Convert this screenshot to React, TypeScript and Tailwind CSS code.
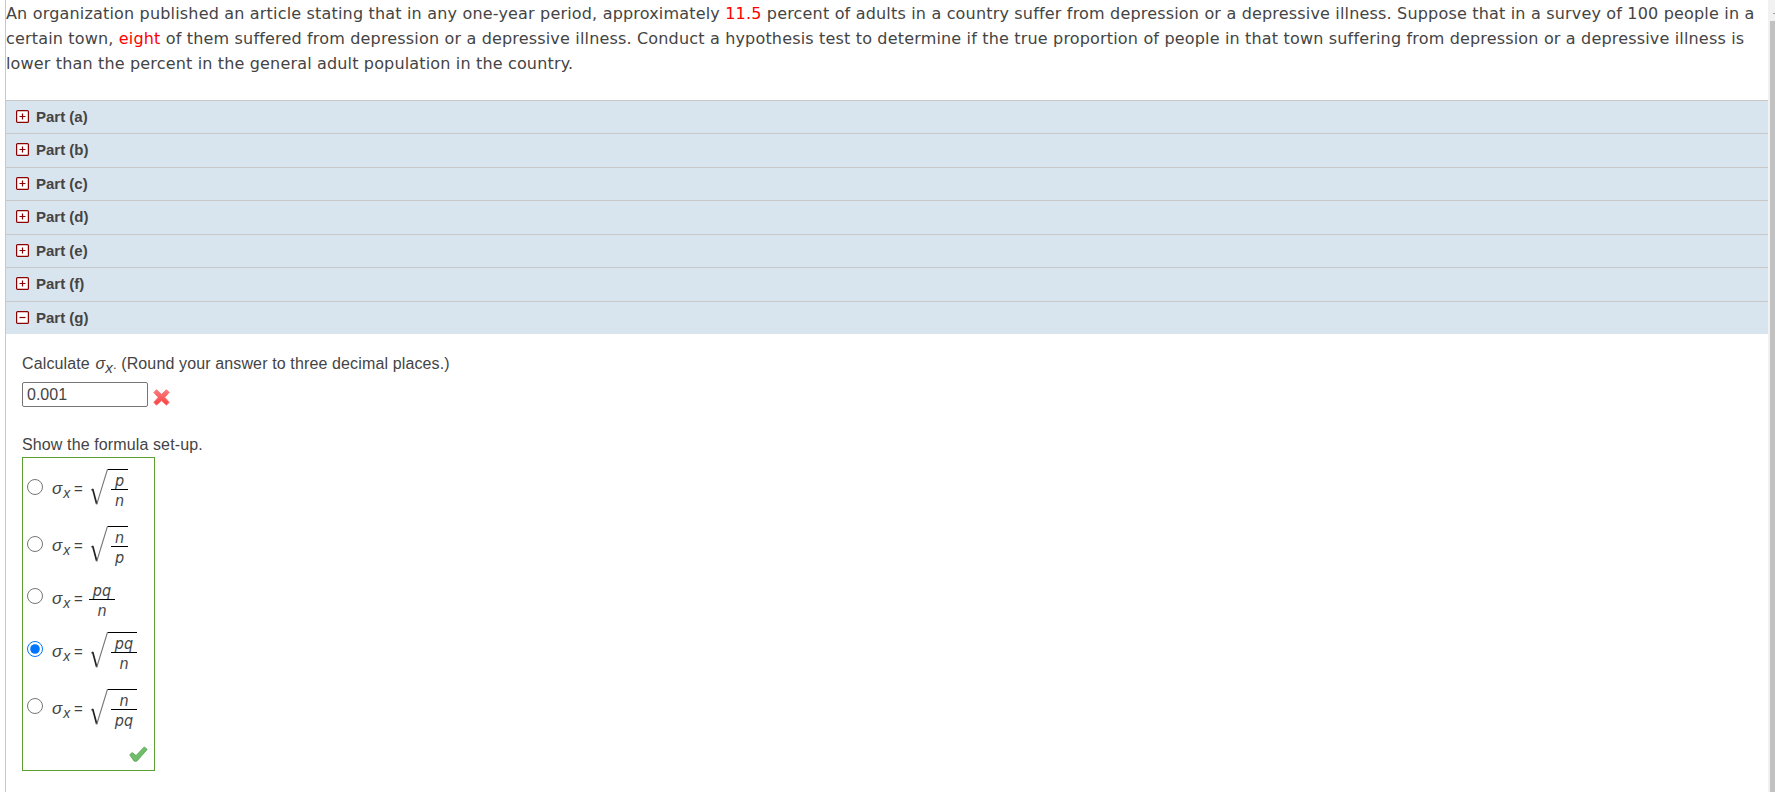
import { useState } from "react";

interface Part {
  label: string;
  height: string;
}

interface Opcion {
  num: string;
  den: string;
  raiz: boolean;
  height: string;
  radio: string;
}

const PARTS: Part[] = [
  { label: "Part (a)", height: "h-[33px]" },
  { label: "Part (b)", height: "h-[34px]" },
  { label: "Part (c)", height: "h-[33px]" },
  { label: "Part (d)", height: "h-[34px]" },
  { label: "Part (e)", height: "h-[33px]" },
  { label: "Part (f)", height: "h-[34px]" },
  { label: "Part (g)", height: "h-[33px]" },
];

const OPTIONS: Opcion[] = [
  { num: "p", den: "n", raiz: true, height: "h-[57px]", radio: "mt-[10px]" },
  { num: "n", den: "p", raiz: true, height: "h-[53px]", radio: "mt-[10px]" },
  { num: "pq", den: "n", raiz: false, height: "h-[53px]", radio: "mt-[9px]" },
  { num: "pq", den: "n", raiz: true, height: "h-[57px]", radio: "mt-[9px]" },
  { num: "n", den: "pq", raiz: true, height: "h-[57px]", radio: "mt-[9px]" },
];

function ToggleIcon({ open }: { open: boolean }) {
  return (
    <svg width="13" height="13" viewBox="0 0 13 13" className="mb-[2px] shrink-0">
      <rect x="0.6" y="0.6" width="11.8" height="11.8" rx="1" fill="#fff" stroke="#8b0000" strokeWidth="1.2" />
      <path d={open ? "M3.5 6.5h6" : "M3.5 6.5h6M6.5 3.5v6"} stroke="#8b0000" strokeWidth="1.2" />
    </svg>
  );
}

function WrongIcon() {
  return (
    <svg width="17" height="17" viewBox="0 0 17 17" className="mt-[7px] ml-[5px]">
      <defs>
        <linearGradient id="cross" x1="0" y1="0" x2="0" y2="1">
          <stop offset="0" stopColor="#fb7f7f" />
          <stop offset="1" stopColor="#f93f3f" />
        </linearGradient>
      </defs>
      <path
        d="M3.5.8 8.5 5.3 13.5.8 16.2 3.5 11.8 8.3 16.2 13.3 13.5 16.2 8.5 11.8 3.5 16.2.8 13.3 5.2 8.3.8 3.5z"
        fill="url(#cross)"
        stroke="#fb7b7b"
        strokeLinejoin="round"
      />
    </svg>
  );
}

function RightIcon() {
  return (
    <svg width="19" height="16" viewBox="0 0 19 16">
      <path
        d="M3.2 6.6 7 9.6 15.3.9 18.2 3.4 7.8 15.2 5.2 15.2.7 8.8z"
        fill="#6fbf6a"
        stroke="#5a9e56"
        strokeWidth="0.8"
        strokeLinejoin="round"
      />
    </svg>
  );
}

function Radical() {
  return (
    <svg width="17" height="37" viewBox="0 0 17 37" className="ml-[7px] shrink-0" fill="none">
      <path d="M0 21.2 2 19.8" stroke="#555" />
      <path d="M1.7 20 5.7 35" stroke="#222" strokeWidth="1.7" />
      <path d="M5.7 35.5 16.4.5H17" stroke="#777" strokeWidth="1.1" />
    </svg>
  );
}

function Fraction({ num, den }: { num: string; den: string }) {
  const wide = num.length > 1 || den.length > 1;
  return (
    <span
      className={`${wide ? "w-[26px]" : "w-[17px]"} flex flex-col text-center font-['DejaVu_Sans_Condensed','DejaVu_Sans',sans-serif] text-[16px] italic`}
    >
      <span className="h-5 border-b border-black leading-[22px]">{num}</span>
      <span className="leading-[22px]">{den}</span>
    </span>
  );
}

function Formula({ num, den, raiz }: { num: string; den: string; raiz: boolean }) {
  return (
    <span className="flex items-start">
      <span className="mt-[9px] w-[11px] text-[17px] leading-[22px] italic">σ</span>
      <span className="mt-[14px] w-[9px] font-['DejaVu_Sans_Condensed','DejaVu_Sans',sans-serif] text-[14px] leading-[20px] italic">x</span>
      <span className="mt-[10px] ml-[2px] w-[10px] text-[15px] leading-[20px]">=</span>
      {raiz ? (
        <>
          <Radical />
          <span className="border-t border-black pl-[3px]">
            <Fraction num={num} den={den} />
          </span>
        </>
      ) : (
        <span className="ml-[5px] pt-px">
          <Fraction num={num} den={den} />
        </span>
      )}
    </span>
  );
}

export default function App() {
  const [answer, setAnswer] = useState("0.001");
  const [selected, setSelected] = useState(3);
  const [open, setOpen] = useState(6);

  return (
    <div className="flex h-[792px] w-full overflow-hidden bg-white font-['Liberation_Sans',Arial,sans-serif] text-[#444]">
      <main className="ml-[5px] w-[1763px] border-l border-[#c8c8c8]">
        <div className="h-[100px] pt-px font-['DejaVu_Sans',Verdana,sans-serif] text-[16px] leading-[25px] whitespace-nowrap">
          <p className="tracking-[0.179px]">
            An organization published an article stating that in any one-year period, approximately{" "}
            <span className="text-[#f00]">11.5</span> percent of adults in a country suffer from depression or a
            depressive illness. Suppose that in a survey of 100 people in a
          </p>
          <p className="tracking-[0.171px]">
            certain town, <span className="text-[#f00]">eight</span> of them suffered from depression or a depressive
            illness. Conduct a hypothesis test to determine if the true proportion of people in that town suffering
            from depression or a depressive illness is
          </p>
          <p className="tracking-[0.16px]">lower than the percent in the general adult population in the country.</p>
        </div>

        {PARTS.map((part, i) => (
          <button
            key={part.label}
            onClick={() => setOpen(i)}
            className={`${part.height} flex w-full items-center border-t border-[#c8c8c8] bg-[#d9e5ee] pl-[10px] text-[15px] font-bold`}
          >
            <ToggleIcon open={open === i} />
            <span className="ml-[7px]">{part.label}</span>
          </button>
        ))}

        <section className="pt-[19px] pl-4 text-[16px]">
          <p className="h-[29px] leading-[22px] tracking-[0.13px] whitespace-nowrap">
            Calculate <i className="ml-px">σ</i>
            <i className="relative top-[4px] text-[15px]">x</i>
            <span className="text-[13px]">.</span> (Round your answer to three decimal places.)
          </p>
          <div className="flex h-[54px] items-start">
            <input
              value={answer}
              onChange={(e) => setAnswer(e.target.value)}
              className="h-[25px] w-[126px] rounded-[2px] border border-[#767676] px-[4px] text-[16px]"
            />
            <WrongIcon />
          </div>
          <p className="h-[21px] leading-[18px] tracking-[0.12px]">Show the formula set-up.</p>
          <div className="flex h-[314px] w-[133px] flex-col border border-[#5c9e31] pt-[11px] pl-1">
            {OPTIONS.map((o, i) => (
              <label key={i} className={`${o.height} flex shrink-0 items-start`}>
                <input
                  type="radio"
                  name="formula"
                  checked={selected === i}
                  onChange={() => setSelected(i)}
                  className={`${o.radio} mr-[9px] h-4 w-4 shrink-0`}
                />
                <Formula num={o.num} den={o.den} raiz={o.raiz} />
              </label>
            ))}
            <div className="flex justify-end pr-[6px]">
              <RightIcon />
            </div>
          </div>
        </section>
      </main>
      <div className="flex-1 bg-[#f1f1f1] pl-[2px]">
        <div className="h-[13px]" />
        <div className="ml-[3px] h-px bg-[#a3a3a3]" />
        <div className="mt-[7px] h-[771px] bg-[#c1c1c1]" />
      </div>
    </div>
  );
}
